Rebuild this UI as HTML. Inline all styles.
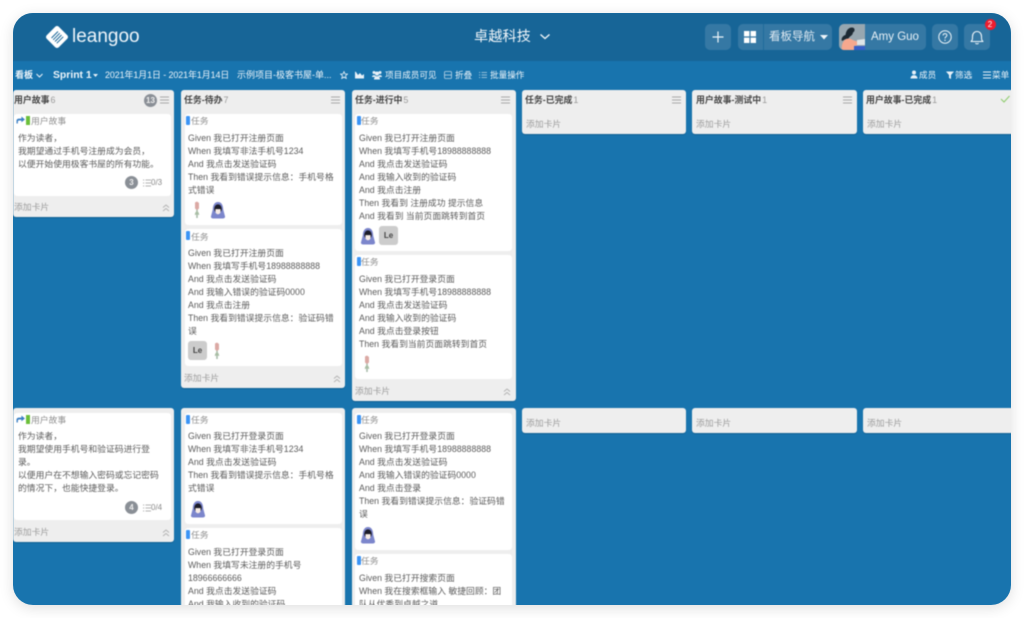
<!DOCTYPE html>
<html lang="zh"><head><meta charset="utf-8"><title>leangoo</title>
<style>
html,body{margin:0;padding:0;background:#fff;width:1024px;height:618px;overflow:hidden}
body{font-family:"Liberation Sans","Noto Sans CJK SC",sans-serif;position:relative}
#w{position:absolute;left:13px;top:13px;width:998px;height:592px;border-radius:20px;overflow:hidden;background:#1874ae;box-shadow:0 3px 14px rgba(0,0,0,.13)}
#i{position:absolute;left:-13px;top:-13px;width:1024px;height:618px;filter:blur(.5px)}
#i div,#i svg,#i span.a{position:absolute}
.hd{left:13px;top:13px;width:998px;height:48px;background:#176597}
.btn{background:rgba(255,255,255,.13);border-radius:5px;top:24px;height:26px}
.l{background:#eee;border-radius:3px;box-shadow:0 1px 1px rgba(0,0,0,.15)}
.c{background:#fff;border-radius:3px}
.t{font-size:8.8px;line-height:13px;color:#5c5c5c;white-space:nowrap}
.tl{font-size:8.8px;line-height:12px;color:#8f8f8f;white-space:nowrap}
.h{font-size:8.9px;line-height:12px;font-weight:bold;color:#444;white-space:nowrap}
.h b{font-weight:normal;color:#999;margin-left:1px}
.ad{font-size:8.8px;line-height:12px;color:#9c9c9c;white-space:nowrap}
.tb{font-size:8.6px;line-height:12px;color:#eef5fa;white-space:nowrap;top:69px}
.bar{width:4px;height:9px;border-radius:1px;background:#3b94f5}
.g{background:#6cbf3a;width:4px;height:9px}
.le{width:19px;height:19px;border-radius:3px;background:#ccc;color:#444;font-size:8px;font-weight:bold;line-height:19px;text-align:center}
.bd{width:13px;height:13px;border-radius:50%;background:#8a8f96;color:#eee;font-size:8px;font-weight:bold;line-height:13px;text-align:center}
.men{width:9px;height:8px}
</style></head><body>
<svg width="0" height="0" style="position:absolute"><defs>
<symbol id="hood" viewBox="0 0 16 18"><path d="M8 0C4 0 2.500 4 2.500 8L.5 15.500C.5 17 2 17.500 3 17.500H13C14 17.500 15.500 17 15.500 15.500L13.500 8C13.500 4 12 0 8 0Z" fill="#7c86cc"/><path d="M8 2.500C5 2.500 4 5.500 4 8L5 10.500H11L12 8C12 5.500 11 2.500 8 2.500Z" fill="#1c1c28"/><path d="M5.300 7.500H10.700V10.500C10.700 12 9 13 8 13S5.300 12 5.300 10.500Z" fill="#f6ebe6"/></symbol>
<symbol id="rose" viewBox="0 0 10 18"><path d="M5 8V17" stroke="#a5b8a6" stroke-width="1.500"/><path d="M3 1.500L5 0.500L7 2V7.500L5 9L3 7.500Z" fill="#dba9a4"/><path d="M5 10.500C3.500 10.500 3 12 2.800 14C4 14 4.500 13.500 5 12.500C5.500 13.500 6 14 7.200 14C7 12 6.500 10.500 5 10.500Z" fill="#a9bfa5"/></symbol>
<symbol id="men" viewBox="0 0 9 8"><path d="M0 1H9M0 4H9M0 7H9" stroke="#a8a8a8" stroke-width="1"/></symbol>
<symbol id="chev" viewBox="0 0 8 8"><path d="M1 3.500L4 1L7 3.500M1 7L4 4.500L7 7" fill="none" stroke="#b4b4b4" stroke-width="1"/></symbol>
<symbol id="arrow" viewBox="0 0 10 9"><path d="M0.500 8.500V5.500C0.500 3.500 2 3 3.500 3H6V0.500L10 4L6 7V5H3.500C2.500 5 2 5.500 2 6.500V8.500Z" fill="#3a7fc4"/></symbol>
<symbol id="lst" viewBox="0 0 8 8"><path d="M0 1H1.200M0 4H1.200M0 7H1.200M2.500 1H8M2.500 4H8M2.500 7H8" stroke="#999" stroke-width=".8"/></symbol>
</defs></svg>
<div id="w"><div id="i">
<div class="hd"></div>

<svg style="left:44px;top:24px" width="26" height="26" viewBox="0 0 26 26"><rect x="4.500" y="4.500" width="17" height="17" rx="2.500" transform="rotate(45 13 13)" fill="#fff"/><path d="M7.500 14L14 7.500M9.200 15.800L15.800 9.200M11 17.500L17.500 11M12.800 19.200L19.200 12.800" stroke="#176597" stroke-width="1"/></svg>
<div style="left:72px;top:25px;font-size:19px;line-height:24px;color:#eef5fa;white-space:nowrap">leangoo</div>
<div style="left:474px;top:28px;font-size:14.200px;line-height:19px;color:#f1f6fa;white-space:nowrap">卓越科技</div>
<svg style="left:539px;top:33px" width="12" height="8" viewBox="0 0 12 8"><path d="M1.500 1.500L6 5.500L10.500 1.500" fill="none" stroke="#f1f6fa" stroke-width="1.400"/></svg>

<div class="btn" style="left:705px;width:26px"></div>
<svg style="left:712px;top:31px" width="12" height="12" viewBox="0 0 12 12"><path d="M6 0.500V11.500M0.500 6H11.500" stroke="#eef5fa" stroke-width="1.200"/></svg>
<div class="btn" style="left:738px;width:94px"></div>
<div style="left:763px;top:24px;width:1px;height:26px;background:rgba(23,101,151,.7)"></div>
<svg style="left:744px;top:31px" width="12" height="12" viewBox="0 0 12 12"><path d="M0 0H5.400V5.400H0ZM6.600 0H12V5.400H6.600ZM0 6.600H5.400V12H0ZM6.600 6.600H12V12H6.600Z" fill="#fff"/></svg>
<div style="left:769px;top:30px;font-size:11.500px;line-height:15px;color:#dfeaf2;white-space:nowrap">看板导航</div>
<svg style="left:820px;top:35px" width="8" height="5" viewBox="0 0 8 5"><path d="M0 0H8L4 4.500Z" fill="#eef5fa"/></svg>
<div class="btn" style="left:839px;width:87px"></div>
<svg style="left:839px;top:24px;border-radius:5px 0 0 5px" width="26" height="26" viewBox="0 0 26 26"><rect width="26" height="26" fill="#97a7b0"/><path d="M3 26C2 20 5 15 9 14.500C12 14 14 17 19 17.500V21L15 22V26Z" fill="#f6a88e"/><path d="M3 17C1.500 14 5 11 6.500 11C7 7 9 3.500 13 3.500C16 3.500 16.500 7 14 8.500C13.500 12 10.500 12 9.500 14.500C7 14.500 5 16 3 17Z" fill="#1d2a33"/><path d="M18 16L26 15V21H18Z" fill="#dfe5e8"/><path d="M15 22H26V26H15Z" fill="#3760c9"/></svg>
<div style="left:871px;top:30px;font-size:11.500px;line-height:15px;color:#e8f1f7;white-space:nowrap">Amy Guo</div>
<div class="btn" style="left:932px;width:26px"></div>
<svg style="left:938px;top:30px" width="14" height="14" viewBox="0 0 14 14"><circle cx="7" cy="7" r="6.200" fill="none" stroke="#eef5fa" stroke-width="1"/><path d="M5.100 5.500C5.100 3 8.900 3 8.900 5.300C8.900 6.800 7 6.800 7 8.500" fill="none" stroke="#eef5fa" stroke-width="1"/><circle cx="7" cy="10.300" r=".7" fill="#eef5fa"/></svg>
<div class="btn" style="left:964px;width:26px"></div>
<svg style="left:970px;top:30px" width="14" height="15" viewBox="0 0 14 15"><path d="M1 11.500C2.500 10.500 2.500 9 2.500 6.500C2.500 3.500 4.500 1.500 7 1.500S11.500 3.500 11.500 6.500C11.500 9 11.500 10.500 13 11.500Z" fill="none" stroke="#eef5fa" stroke-width="1.100" stroke-linejoin="round"/><path d="M5.500 13C6 14.200 8 14.200 8.500 13" fill="none" stroke="#eef5fa" stroke-width="1"/></svg>
<div style="left:984.500px;top:18.500px;width:11px;height:11px;border-radius:50%;background:#ee1c2e;color:#fff;font-size:8px;line-height:11px;text-align:center">2</div>

<div class="tb" style="left:15px;font-weight:bold;font-size:9px;top:69px">看板</div>
<svg style="left:36px;top:73px" width="7" height="5" viewBox="0 0 7 5"><path d="M.5 1L3.500 4L6.500 1" fill="none" stroke="#e8f1f8" stroke-width="1.100"/></svg>
<div class="tb" style="left:53px;font-weight:bold;font-size:10.400px;top:69.500px">Sprint 1</div>
<svg style="left:93px;top:74px" width="5" height="3" viewBox="0 0 5 3"><path d="M0 0H5L2.500 3Z" fill="#e8f1f8"/></svg>
<div class="tb" style="left:105px;font-size:8.900px;letter-spacing:-.05px">2021年1月1日 - 2021年1月14日</div>
<div class="tb" style="left:237px;font-size:9px">示例项目-极客书屋-单...</div>
<svg style="left:340px;top:71px" width="8" height="8" viewBox="0 0 8 8"><path d="M4 .5L5 3H7.600L5.500 4.800L6.300 7.500L4 6L1.700 7.500L2.500 4.800L.4 3H3Z" fill="none" stroke="#e8f1f8" stroke-width=".8"/></svg>
<svg style="left:355px;top:71px" width="9" height="8" viewBox="0 0 9 8"><path d="M0 0.500V7.500H9V3L7 4.500L5 2L3 4L1 1Z" fill="#e8f1f8"/></svg>
<svg style="left:372px;top:70px" width="10" height="10" viewBox="0 0 10 10"><circle cx="2" cy="2.500" r="1.500" fill="#e8f1f8"/><circle cx="8" cy="2.500" r="1.500" fill="#e8f1f8"/><circle cx="5" cy="3.500" r="2" fill="#e8f1f8"/><path d="M0 7C0 4.500 4 4.500 4 7ZM6 7C6 4.500 10 4.500 10 7ZM2 9.500C2 5 8 5 8 9.500Z" fill="#e8f1f8"/></svg>
<div class="tb" style="left:385px">项目成员可见</div>
<svg style="left:444px;top:71px" width="8" height="8" viewBox="0 0 8 8"><rect x=".5" y=".5" width="7" height="7" rx="1" fill="none" stroke="#bcd6e8" stroke-width=".8"/><path d="M.5 4H7.500" stroke="#bcd6e8" stroke-width=".8"/></svg>
<div class="tb" style="left:455px">折叠</div>
<svg style="left:479px;top:71px" width="8" height="8" viewBox="0 0 8 8"><path d="M0 1.500H1.200M0 4H1.200M0 6.500H1.200M2.500 1.500H8M2.500 4H8M2.500 6.500H8" stroke="#bcd6e8" stroke-width=".8"/></svg>
<div class="tb" style="left:490px">批量操作</div>
<svg style="left:910px;top:70px" width="8" height="9" viewBox="0 0 8 9"><circle cx="4" cy="2.500" r="2" fill="#e8f1f8"/><path d="M.5 8.500C.5 4 7.500 4 7.500 8.500Z" fill="#e8f1f8"/></svg>
<div class="tb" style="left:919px">成员</div>
<svg style="left:946px;top:71px" width="8" height="8" viewBox="0 0 8 8"><path d="M0 .5H8L5 4V8L3 7V4Z" fill="#e8f1f8"/></svg>
<div class="tb" style="left:955px">筛选</div>
<svg style="left:983px;top:71px" width="8" height="8" viewBox="0 0 8 8"><path d="M0 1H8M0 4H8M0 7H8" stroke="#e8f1f8" stroke-width="1"/></svg>
<div class="tb" style="left:992px">菜单</div>

<!-- Row 1 lists -->
<div class="l" style="left:13px;top:90px;width:161px;height:127px"></div>
<div class="l" style="left:181px;top:90px;width:164px;height:298px"></div>
<div class="l" style="left:352px;top:90px;width:164px;height:311px"></div>
<div class="l" style="left:522px;top:90px;width:164px;height:44px"></div>
<div class="l" style="left:692px;top:90px;width:165px;height:44px"></div>
<div class="l" style="left:863px;top:90px;width:160px;height:44px"></div>
<!-- Row 2 lists -->
<div class="l" style="left:13px;top:408px;width:161px;height:134px"></div>
<div class="l" style="left:181px;top:408px;width:164px;height:210px"></div>
<div class="l" style="left:352px;top:408px;width:164px;height:210px"></div>
<div class="l" style="left:522px;top:408px;width:164px;height:25px"></div>
<div class="l" style="left:692px;top:408px;width:165px;height:25px"></div>
<div class="l" style="left:863px;top:408px;width:160px;height:25px"></div>

<!-- Headers -->
<div class="h" style="left:14px;top:94px">用户故事<b>6</b></div>
<div class="bd" style="left:144px;top:94px;background:#8a8f96">13</div>
<svg class="men" style="left:160px;top:96px"><use href="#men"/></svg>
<div class="h" style="left:184px;top:94px">任务-待办<b>7</b></div>
<svg class="men" style="left:331px;top:96px"><use href="#men"/></svg>
<div class="h" style="left:355px;top:94px">任务-进行中<b>5</b></div>
<svg class="men" style="left:501px;top:96px"><use href="#men"/></svg>
<div class="h" style="left:525px;top:94px">任务-已完成<b>1</b></div>
<svg class="men" style="left:672px;top:96px"><use href="#men"/></svg>
<div class="h" style="left:696px;top:94px">用户故事-测试中<b>1</b></div>
<svg class="men" style="left:843px;top:96px"><use href="#men"/></svg>
<div class="h" style="left:866px;top:94px">用户故事-已完成<b>1</b></div>
<svg style="left:1000px;top:95px" width="10" height="8" viewBox="0 0 10 8"><path d="M1 4L4 7L9.500 1" fill="none" stroke="#8ccb6a" stroke-width="1"/></svg>

<!-- col 1 row 1 -->
<div class="c" style="left:14px;top:114px;width:157px;height:82px"></div>
<svg style="left:16px;top:116px" width="9" height="8"><use href="#arrow"/></svg>
<div class="g" style="left:26px;top:116px"></div>
<div class="tl" style="left:31px;top:115px">用户故事</div>
<div class="t" style="left:18px;top:131.500px">作为读者，<br>我期望通过手机号注册成为会员，<br>以便开始使用极客书屋的所有功能。</div>
<div class="bd" style="left:125px;top:176px">3</div>
<svg style="left:143px;top:179px" width="8" height="8"><use href="#lst"/></svg>
<div class="tl" style="left:151px;top:177px;font-size:8px;color:#888">0/3</div>
<div class="ad" style="left:14px;top:201px">添加卡片</div>
<svg style="left:162px;top:204px" width="8" height="8"><use href="#chev"/></svg>

<!-- col 2 row 1 -->
<div class="c" style="left:185px;top:114px;width:157px;height:111px"></div>
<div class="bar" style="left:186px;top:116px"></div>
<div class="tl" style="left:191px;top:115px">任务</div>
<div class="t" style="left:188px;top:131.500px">Given 我已打开注册页面<br>When 我填写非法手机号1234<br>And 我点击发送验证码<br>Then 我看到错误提示信息：手机号格<br>式错误</div>
<svg style="left:192px;top:201px" width="10" height="18"><use href="#rose"/></svg>
<svg style="left:210px;top:202px" width="16" height="17"><use href="#hood"/></svg>
<div class="c" style="left:185px;top:229px;width:157px;height:137px"></div>
<div class="bar" style="left:186px;top:231px"></div>
<div class="tl" style="left:191px;top:231px">任务</div>
<div class="t" style="left:188px;top:246.500px">Given 我已打开注册页面<br>When 我填写手机号18988888888<br>And 我点击发送验证码<br>And 我输入错误的验证码0000<br>And 我点击注册<br>Then 我看到错误提示信息：验证码错<br>误</div>
<div class="le" style="left:188px;top:341px">Le</div>
<svg style="left:212px;top:342px" width="10" height="18"><use href="#rose"/></svg>
<div class="ad" style="left:184px;top:372px">添加卡片</div>
<svg style="left:333px;top:375px" width="8" height="8"><use href="#chev"/></svg>

<!-- col 3 row 1 -->
<div class="c" style="left:355px;top:114px;width:157px;height:137px"></div>
<div class="bar" style="left:357px;top:116px"></div>
<div class="tl" style="left:361px;top:115px">任务</div>
<div class="t" style="left:359px;top:131.500px">Given 我已打开注册页面<br>When 我填写手机号18988888888<br>And 我点击发送验证码<br>And 我输入收到的验证码<br>And 我点击注册<br>Then 我看到 注册成功 提示信息<br>And 我看到 当前页面跳转到首页</div>
<svg style="left:360px;top:228px" width="16" height="17"><use href="#hood"/></svg>
<div class="le" style="left:379px;top:226px">Le</div>
<div class="c" style="left:355px;top:255px;width:157px;height:124px"></div>
<div class="bar" style="left:357px;top:257px"></div>
<div class="tl" style="left:361px;top:256px">任务</div>
<div class="t" style="left:359px;top:272.500px">Given 我已打开登录页面<br>When 我填写手机号18988888888<br>And 我点击发送验证码<br>And 我输入收到的验证码<br>And 我点击登录按钮<br>Then 我看到当前页面跳转到首页</div>
<svg style="left:362px;top:355px" width="10" height="18"><use href="#rose"/></svg>
<div class="ad" style="left:355px;top:385px">添加卡片</div>
<svg style="left:503px;top:388px" width="8" height="8"><use href="#chev"/></svg>

<div class="ad" style="left:526px;top:118px">添加卡片</div>
<div class="ad" style="left:696px;top:118px">添加卡片</div>
<div class="ad" style="left:867px;top:118px">添加卡片</div>
<div class="ad" style="left:526px;top:417px">添加卡片</div>
<div class="ad" style="left:696px;top:417px">添加卡片</div>
<div class="ad" style="left:867px;top:417px">添加卡片</div>

<!-- col 1 row 2 -->
<div class="c" style="left:14px;top:413px;width:157px;height:107px"></div>
<svg style="left:16px;top:415px" width="9" height="8"><use href="#arrow"/></svg>
<div class="g" style="left:26px;top:415px"></div>
<div class="tl" style="left:31px;top:414px">用户故事</div>
<div class="t" style="left:18px;top:429.500px">作为读者，<br>我期望使用手机号和验证码进行登<br>录。<br>以便用户在不想输入密码或忘记密码<br>的情况下，也能快捷登录。</div>
<div class="bd" style="left:125px;top:501px">4</div>
<svg style="left:143px;top:504px" width="8" height="8"><use href="#lst"/></svg>
<div class="tl" style="left:151px;top:502px;font-size:8px;color:#888">0/4</div>
<div class="ad" style="left:14px;top:526px">添加卡片</div>
<svg style="left:162px;top:529px" width="8" height="8"><use href="#chev"/></svg>

<!-- col 2 row 2 -->
<div class="c" style="left:185px;top:413px;width:157px;height:111px"></div>
<div class="bar" style="left:186px;top:415px"></div>
<div class="tl" style="left:191px;top:414px">任务</div>
<div class="t" style="left:188px;top:429.500px">Given 我已打开登录页面<br>When 我填写非法手机号1234<br>And 我点击发送验证码<br>Then 我看到错误提示信息：手机号格<br>式错误</div>
<svg style="left:190px;top:501px" width="16" height="17"><use href="#hood"/></svg>
<div class="c" style="left:185px;top:528px;width:157px;height:90px"></div>
<div class="bar" style="left:186px;top:530px"></div>
<div class="tl" style="left:191px;top:529px">任务</div>
<div class="t" style="left:188px;top:545.500px">Given 我已打开登录页面<br>When 我填写未注册的手机号<br>18966666666<br>And 我点击发送验证码<br>And 我输入收到的验证码</div>

<!-- col 3 row 2 -->
<div class="c" style="left:355px;top:413px;width:157px;height:137px"></div>
<div class="bar" style="left:357px;top:415px"></div>
<div class="tl" style="left:361px;top:414px">任务</div>
<div class="t" style="left:359px;top:429.500px">Given 我已打开登录页面<br>When 我填写手机号18988888888<br>And 我点击发送验证码<br>And 我输入错误的验证码0000<br>And 我点击登录<br>Then 我看到错误提示信息：验证码错<br>误</div>
<svg style="left:360px;top:527px" width="16" height="17"><use href="#hood"/></svg>
<div class="c" style="left:355px;top:554px;width:157px;height:64px"></div>
<div class="bar" style="left:357px;top:556px"></div>
<div class="tl" style="left:361px;top:555px">任务</div>
<div class="t" style="left:359px;top:571.500px">Given 我已打开搜索页面<br>When 我在搜索框输入 敏捷回顾：团<br>队从优秀到卓越之道</div>
</div></div>
</body></html>
